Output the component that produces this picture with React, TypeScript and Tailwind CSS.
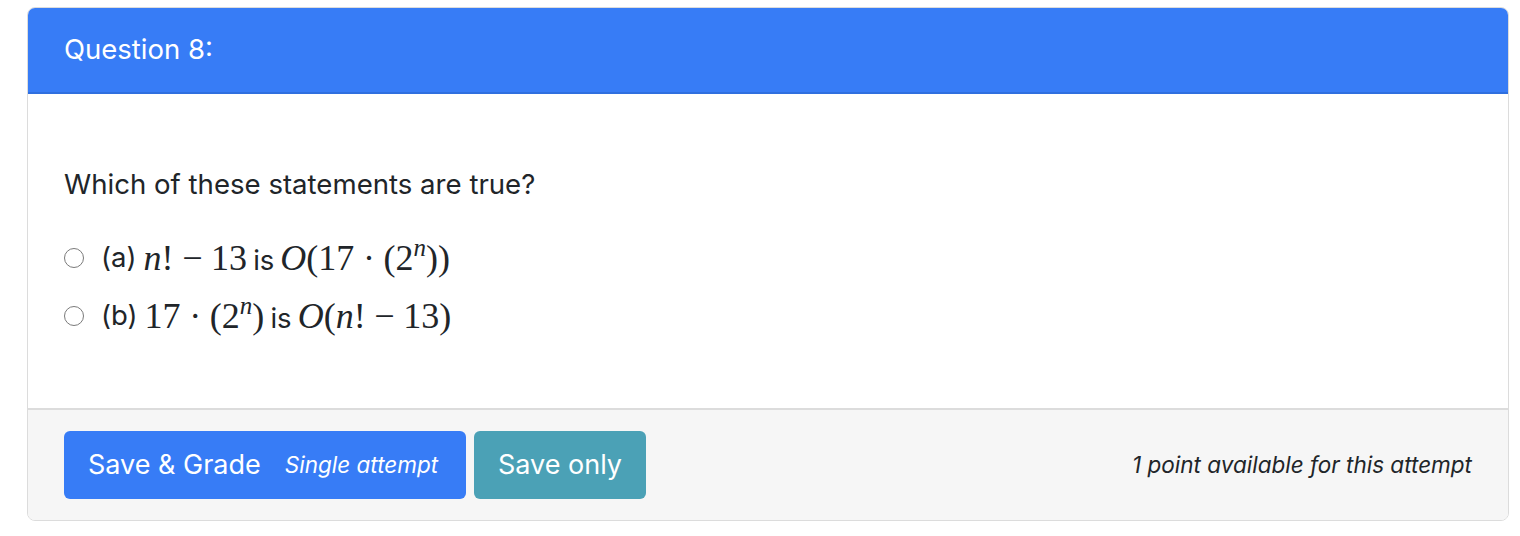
export default function App() {
  const sans = { fontFamily: 'Inter, "Liberation Sans", sans-serif' };
  return (
    <main className="min-h-[536px] bg-white px-[27px] pt-[7px]" style={sans}>
      <section className="w-[1482px] overflow-hidden rounded-[8px] border border-[#dcdcdc] bg-white">
        <header className="flex h-[86px] items-center border-b-2 border-[#2f6fdf] bg-[#377cf6] px-[36px] text-[27.5px] text-white">
          Question 8:
        </header>

        <div className="h-[314px] px-[36px] pt-[70px] text-[#212529]">
          <p className="text-[27.6px] leading-[40px]">Which of these statements are true?</p>

          <div className="mt-[34px] flex flex-col gap-[18px]">
            <Option label="(a)">
              <M i>n</M>
              <M>!</M>
              <Op>−</Op>
              <M>13</M>
              <Is />
              <M i>O</M>
              <M>(17</M>
              <Op>·</Op>
              <M>(2</M>
              <Sup>n</Sup>
              <M>))</M>
            </Option>
            <Option label="(b)">
              <M>17</M>
              <Op>·</Op>
              <M>(2</M>
              <Sup>n</Sup>
              <M>)</M>
              <Is />
              <M i>O</M>
              <M>(</M>
              <M i>n</M>
              <M>!</M>
              <Op>−</Op>
              <M>13)</M>
            </Option>
          </div>
        </div>

        <footer className="flex h-[112px] items-center border-t-2 border-[#dcdcdc] bg-[#f6f6f6] pl-[36px] pr-[36px]">
          <button className="flex h-[68px] w-[402px] items-center rounded-[6px] bg-[#377cf6] pl-[24px] text-white">
            <span className="text-[27px]">Save &amp; Grade</span>
            <span className="ml-[24px] text-[22.5px] italic">Single attempt</span>
          </button>
          <button className="ml-[8px] flex h-[68px] w-[172px] items-center justify-center rounded-[6px] bg-[#4ba1b6] text-[27px] text-white">
            Save only
          </button>
          <span className="ml-auto text-[22.5px] italic text-[#212529]">1 point available for this attempt</span>
        </footer>
      </section>
    </main>
  );
}

function Option({ label, children }: { label: string; children: React.ReactNode }) {
  return (
    <div className="flex h-[40px] items-center">
      <span className="h-[20px] w-[20px] rounded-full border border-[#7a7a7a] bg-white" />
      <span className="ml-[17px] text-[27.5px]">{label}</span>
      <span
        className="ml-[7px] flex items-baseline text-[36px] leading-none"
        style={{ fontFamily: '"Liberation Serif", serif' }}
      >
        {children}
      </span>
    </div>
  );
}

function M({ children, i }: { children: React.ReactNode; i?: boolean }) {
  return <span className={i ? 'italic' : ''}>{children}</span>;
}

function Op({ children }: { children: React.ReactNode }) {
  return <span className="mx-[0.24em]">{children}</span>;
}

function Sup({ children }: { children: React.ReactNode }) {
  return <span className="relative -top-[0.55em] text-[25px] italic">{children}</span>;
}

function Is() {
  return (
    <span className="mx-[0.22em] text-[27.5px]" style={{ fontFamily: 'Inter, "Liberation Sans", sans-serif' }}>
      is
    </span>
  );
}
